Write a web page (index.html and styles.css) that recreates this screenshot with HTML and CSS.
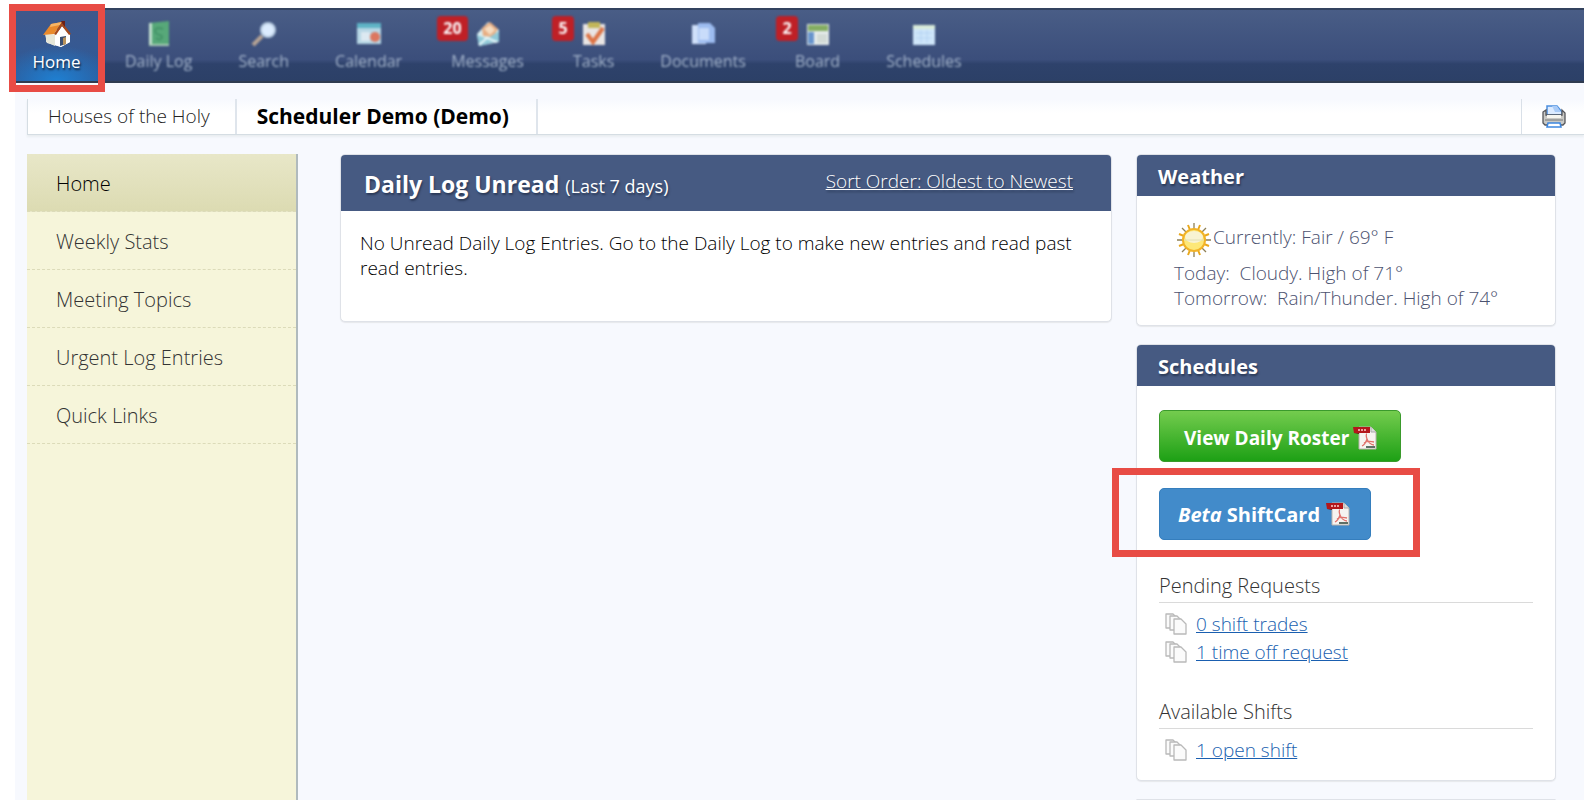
FILE: index.html
```html
<!DOCTYPE html>
<html lang="en">
<head>
    <meta charset="UTF-8">
    <meta name="viewport" content="width=device-width, initial-scale=1.0">
    <title>Scheduler Demo</title>
    <link rel="stylesheet" href="styles.css">
</head>
<body>
    <!-- Shared icons -->
    <svg class="icon-defs" width="0" height="0" aria-hidden="true">
        <symbol id="icon-pdf" viewBox="0 0 24 24">
            <path d="M6 1h12l5 5v17H6z" fill="#f6f3f0" stroke="#b9b2ac" stroke-width="1"/>
            <path d="M18 1v5h5" fill="#dcdcdc" stroke="#a9a9a9" stroke-width="1"/>
            <path d="M14 8c-1 0-1 2 0 5 1 3 4 6 7 6M14 13c-1 3-3 6-5 7M11 17c3-2 6-2 10-1" fill="none" stroke="#e0706a" stroke-width="1.3"/>
            <path d="M13 21h9" stroke="#5f6f66" stroke-width="2"/>
            <path d="M0 1h17v6H1z" fill="#b3161b"/>
            <path d="M5 4h8" stroke="#e9a0a0" stroke-width="2" stroke-dasharray="2 1"/>
            <path d="M1 7h5v1z" fill="#701015"/>
        </symbol>
        <symbol id="icon-pages" viewBox="0 0 22 22">
            <g fill="#fbfbfb" stroke="#b9b9b9" stroke-width="1.3" stroke-linejoin="round">
                <path d="M1 1h7l3 3v11H1z"/>
                <path d="M5 3h7l4 4v10H5z"/>
                <path d="M9 6h7l5 5v10H9z"/>
            </g>
        </symbol>
    </svg>

    <div class="page">
        <nav class="topnav">
            <a href="#" class="nav-item active">
                <svg width="28" height="28" viewBox="0 0 28 28">
                    <path d="M2 14l10-5 15 5v8l-9 5-14-4z" fill="#f5f3ea"/>
                    <path d="M12 16l7-10 8 9v7l-9 5-6-2z" fill="#fff"/>
                    <path d="M3 14v8l9 4V15z" fill="#e5e6d8"/>
                    <path d="M8 4l11-2-8 12-11 1z" fill="#e98a2c"/>
                    <path d="M8 4l11-2-2 3-10 2z" fill="#f7b566"/>
                    <path d="M19 2l9 12-2 1-7-9-6 9-2-1z" fill="#a5491b"/>
                    <path d="M18 1h4v6l-3-4z" fill="#6d2015"/>
                    <path d="M17 17l6-1v8l-6 2z" fill="#3c4f70"/>
                    <path d="M20 18l3-1v7l-3 1z" fill="#b8925a"/>
                </svg>
                <span>Home</span>
            </a>
            <a href="#" class="nav-item">
                <svg width="28" height="28" viewBox="0 0 28 28">
                    <path d="M4 3l20-2v24H4z" fill="#57a879"/>
                    <path d="M4 3h3v22H4z" fill="#c3e0cf"/>
                    <path d="M18 9c-7-3-9 1-7 4s6 1 6 4-4 3-6 1" fill="none" stroke="#449468" stroke-width="2"/>
                    <path d="M4 25h20" stroke="#a8cbb5" stroke-width="2"/>
                </svg>
                <span>Daily Log</span>
            </a>
            <a href="#" class="nav-item">
                <svg width="28" height="28" viewBox="0 0 28 28">
                    <path d="M3 25l9-9" stroke="#b4a294" stroke-width="4"/>
                    <circle cx="18" cy="10" r="7" fill="#dcecff" stroke="#b8cce0" stroke-width="2"/>
                </svg>
                <span>Search</span>
            </a>
            <a href="#" class="nav-item">
                <svg width="28" height="28" viewBox="0 0 28 28">
                    <path d="M2 3h24v21H2z" fill="#b7d7e5"/>
                    <path d="M2 3h24v5H2z" fill="#5fb3c5"/>
                    <path d="M6 12h9v9H6z" fill="#dce9f1"/>
                    <circle cx="20" cy="17" r="5" fill="#dc775f"/>
                </svg>
                <span>Calendar</span>
            </a>
            <a href="#" class="nav-item has-badge">
                <b class="badge">20</b>
                <svg width="28" height="28" viewBox="0 0 28 28">
                    <path d="M3 14L14 2l11 8v12L5 26z" fill="#d9eef2"/>
                    <path d="M8 8l8-6 8 7-5 8-10-1z" fill="#e7ad82"/>
                    <path d="M10 9l6-4 5 5-5 5z" fill="#f6dcc0"/>
                    <path d="M3 15l10 4 12-8v10L5 26z" fill="#8fc9d8"/>
                    <path d="M5 25l8-7 10 4" fill="none" stroke="#e8f7fa" stroke-width="2"/>
                </svg>
                <span>Messages</span>
            </a>
            <a href="#" class="nav-item has-badge">
                <b class="badge">5</b>
                <svg width="28" height="28" viewBox="0 0 28 28">
                    <path d="M3 4h22v21H3z" fill="#e9e5e4"/>
                    <path d="M8 2h12v6H8z" fill="#c2b65a"/>
                    <path d="M7 14l6 8 10-14" fill="none" stroke="#dc7345" stroke-width="4"/>
                </svg>
                <span>Tasks</span>
            </a>
            <a href="#" class="nav-item">
                <svg width="28" height="28" viewBox="0 0 28 28">
                    <path d="M3 5h14v19H3z" fill="#cfe0fa"/>
                    <path d="M9 3h12l5 5v15H9z" fill="#9dbcf0"/>
                    <path d="M10 8h10v12H10z" fill="#c9dcfa"/>
                </svg>
                <span>Documents</span>
            </a>
            <a href="#" class="nav-item has-badge">
                <b class="badge">2</b>
                <svg width="28" height="28" viewBox="0 0 28 28">
                    <path d="M3 4h22v21H3z" fill="#e6ecec"/>
                    <path d="M4 5h20v6H4z" fill="#84ad62"/>
                    <path d="M4 12h6v12H4z" fill="#6794cc"/>
                    <path d="M13 14h10v9H13z" fill="#d3dbd6"/>
                </svg>
                <span>Board</span>
            </a>
            <a href="#" class="nav-item">
                <svg width="28" height="28" viewBox="0 0 28 28">
                    <path d="M3 5h22v20H3z" fill="#cfe6fa"/>
                    <path d="M3 5h22v4H3z" fill="#d9ecd9"/>
                    <path d="M6 13h16M6 18h16M11 10v13M17 10v13" stroke="#b4d3f2" stroke-width="1"/>
                </svg>
                <span>Schedules</span>
            </a>
            <div class="highlight highlight-home"></div>
        </nav>

        <div class="subnav">
            <a href="#" class="crumb">Houses of the Holy</a>
            <a href="#" class="crumb current">Scheduler Demo (Demo)</a>
            <a href="#" class="print" aria-label="Print">
                <svg width="24" height="24" viewBox="0 0 24 24">
                    <path d="M5 9V2h10l5 6v3H5z" fill="#dcebff" stroke="#4b8fe0" stroke-width="1.5"/>
                    <path d="M10 2h5l4 6h-6z" fill="#a9cbf7"/>
                    <path d="M1 8l3-2v5h16V6l3 3v10l-2 2H3l-2-2z" fill="#c9c9c5" stroke="#55565a" stroke-width="1.3"/>
                    <path d="M5 11h14v3H5z" fill="#f6f5ef"/>
                    <path d="M3 16h18" stroke="#77787a" stroke-width="1"/>
                    <path d="M6 19h12l1 4H5z" fill="#fff" stroke="#3c86e0" stroke-width="1.5"/>
                </svg>
            </a>
        </div>

        <div class="content">
            <ul class="sidebar">
                <li><a href="#" class="selected">Home</a></li>
                <li><a href="#">Weekly Stats</a></li>
                <li><a href="#">Meeting Topics</a></li>
                <li><a href="#">Urgent Log Entries</a></li>
                <li><a href="#">Quick Links</a></li>
            </ul>

            <main class="main">
                <section class="card">
                    <div class="card-header large">
                        <h1>Daily Log Unread <small>(Last 7 days)</small></h1>
                        <a href="#">Sort Order: Oldest to Newest</a>
                    </div>
                    <p class="log-text">No Unread Daily Log Entries. Go to the Daily Log to make new entries and read past read entries.</p>
                </section>
            </main>

            <aside class="widgets">
                <section class="card">
                    <div class="card-header"><h2>Weather</h2></div>
                    <div class="weather">
                        <p class="weather-now">
                            <svg width="34" height="34" viewBox="0 0 34 34">
                                <g stroke="#8f8055" stroke-width="1.3">
                                    <path d="M17 0v34M0 17h34M5 5l24 24M29 5L5 29"/>
                                    <path d="M11 2l12 30M23 2L11 32M2 11l30 12M2 23l30-12" stroke="#e9a81c" stroke-width="2"/>
                                </g>
                                <circle cx="17" cy="17" r="12" fill="#f2b327"/>
                                <circle cx="17" cy="17" r="10" fill="#fde878"/>
                                <ellipse cx="17" cy="14" rx="9" ry="6" fill="#f8f3d2"/>
                                <path d="M7 17h20" stroke="#e2dfb4" stroke-width="1"/>
                            </svg>
                            <span>Currently: Fair / 69° F</span>
                        </p>
                        <p>Today:&nbsp; Cloudy. High of 71°</p>
                        <p>Tomorrow:&nbsp; Rain/Thunder. High of 74°</p>
                    </div>
                </section>

                <section class="card">
                    <div class="card-header"><h2>Schedules</h2></div>
                    <div class="schedules">
                        <button type="button" class="btn btn-roster">View Daily Roster <svg width="24" height="24"><use href="#icon-pdf"/></svg></button>
                        <div class="shiftcard">
                            <button type="button" class="btn btn-shiftcard"><span><em>Beta</em> ShiftCard</span> <svg width="24" height="24"><use href="#icon-pdf"/></svg></button>
                            <div class="highlight highlight-shiftcard"></div>
                        </div>

                        <h3>Pending Requests</h3>
                        <ul class="requests">
                            <li><svg width="22" height="22"><use href="#icon-pages"/></svg><a href="#">0 shift trades</a></li>
                            <li><svg width="22" height="22"><use href="#icon-pages"/></svg><a href="#">1 time off request</a></li>
                        </ul>

                        <h3>Available Shifts</h3>
                        <ul class="requests">
                            <li><svg width="22" height="22"><use href="#icon-pages"/></svg><a href="#">1 open shift</a></li>
                        </ul>
                    </div>
                </section>

                <section class="card"></section>
            </aside>
        </div>
    </div>
</body>
</html>
```
FILE: styles.css
```css
* {
    box-sizing: border-box;
}

body {
    margin: 0;
    background-color: #fff;
    font-family: "Open Sans", "Noto Sans", sans-serif;
    font-size: 19px;
    font-weight: 300;
    line-height: 25px;
    color: #000;
}

h1, h2, h3, p, ul {
    margin: 0;
    padding: 0;
}

ul {
    list-style: none;
}

svg {
    display: block;
    flex-shrink: 0;
}

.icon-defs {
    position: absolute;
}

.page {
    display: flex;
    flex-direction: column;
    min-height: calc(100vh - 8px);
    margin: 8px 0 0 15px;
    background-color: #f7f9fe;
}

/* Top navigation */
.topnav {
    position: relative;
    display: flex;
    height: 75px;
    border-top: 2px solid #33435f;
    border-bottom: 2px solid #2f3b50;
    background: linear-gradient(#495d86, #3b4e7b 70%, #2e426b 76%, #2c4067);
}

.nav-item {
    position: relative;
    display: flex;
    flex-direction: column;
    align-items: center;
    padding: 10px 23px 0;
    font-size: 16px;
    font-weight: 400;
    line-height: 27px;
    color: #a3b3ca;
    text-decoration: none;
}

.nav-item svg,
.nav-item span,
.badge {
    filter: blur(1px);
}

.nav-item.active {
    width: 83px;
    margin-right: 4px;
    padding: 10px 0 0;
    color: #fff;
    font-size: 17px;
    background: radial-gradient(ellipse 70% 50% at 50% 100%, #1f80d2, rgba(31, 128, 210, 0)), linear-gradient(#41588a, #2b5a9a);
    text-shadow: 1px 2px 2px #14233c;
}

.nav-item.active svg,
.nav-item.active span {
    filter: none;
}

.nav-item.has-badge {
    margin-left: 3px;
}

.badge {
    position: absolute;
    top: 6px;
    right: calc(50% + 20px);
    padding: 0 6px;
    border-radius: 4px;
    background-color: #bf2026;
    color: #fff;
    font-size: 16px;
    font-weight: 700;
    line-height: 25px;
}

/* Red callout boxes */
.highlight {
    position: absolute;
    border: 7px solid #e84c45;
    pointer-events: none;
}

.highlight-home {
    top: -6px;
    left: -6px;
    width: 96px;
    height: 88px;
}

.highlight-shiftcard {
    top: -20px;
    left: -47px;
    right: -49px;
    bottom: -17px;
}

/* Location bar */
.subnav {
    display: flex;
    height: 36px;
    margin: 16px 0 19px 12px;
    border-bottom: 1px solid #d5dde3;
    border-left: 1px solid #d5dde3;
    background: linear-gradient(#f7f9fe, #fff 40%);
    box-shadow: 0 2px 2px #e9edf1;
}

.crumb {
    padding: 5px 25px 0 20px;
    border-right: 2px solid #dfe5ec;
    color: #222;
    text-decoration: none;
}

.crumb.current {
    padding: 5px 27px 0 20px;
    color: #000;
    font-size: 21px;
    font-weight: 700;
}

.print {
    margin-left: auto;
    padding: 5px 18px 0 20px;
    border-left: 1px solid #d9e0e8;
}

.content {
    display: flex;
    flex: 1;
    padding-left: 12px;
}

/* Side menu */
.sidebar {
    width: 271px;
    flex-shrink: 0;
    border-right: 2px solid #b0babd;
    background-color: #f6f5da;
}

.sidebar a {
    display: block;
    height: 58px;
    padding: 17px 29px 0;
    border-bottom: 1px dashed #dcdbb9;
    color: #333;
    font-size: 20px;
    text-decoration: none;
}

.sidebar a.selected {
    background: linear-gradient(#e8e7c8, #dcdbb2);
    color: #000;
}

/* Cards */
.main {
    flex: 1;
    margin-left: 42px;
}

.widgets {
    width: 420px;
    flex-shrink: 0;
    display: flex;
    flex-direction: column;
    gap: 18px;
    margin: 0 28px 0 24px;
}

.card {
    border: 1px solid #dfe2e8;
    border-radius: 5px;
    background-color: #fff;
    box-shadow: 0 1px 1px #e6e8ec;
}

.card-header {
    display: flex;
    justify-content: space-between;
    height: 41px;
    padding: 9px 21px 0;
    border-radius: 4px 4px 0 0;
    background-color: #465a82;
    color: #fff;
    text-shadow: 1px 2px 2px #2b3a58;
}

.card-header.large {
    height: 56px;
    padding: 14px 38px 0 23px;
}

.card-header a {
    color: #fff;
}

h1 {
    font-size: 23px;
    line-height: 30px;
}

h1 small {
    font-size: 18px;
    font-weight: 400;
}

h2 {
    font-size: 20px;
    line-height: 25px;
}

.log-text {
    padding: 20px 24px 40px 19px;
}

/* Weather */
.weather {
    padding: 27px 36px 14px 37px;
    color: #4c5270;
}

.weather-now {
    display: flex;
    align-items: flex-start;
    gap: 2px;
    height: 38px;
    padding-left: 3px;
}

.weather-now span {
    padding-top: 2px;
}

/* Schedules */
.schedules {
    padding: 24px 22px 16px;
}

.btn {
    display: flex;
    align-items: center;
    height: 52px;
    border-radius: 5px;
    color: #fff;
    font-family: inherit;
    font-weight: 700;
}

.btn-roster {
    gap: 4px;
    padding: 3px 23px 0 24px;
    border: 1px solid #3a9a2c;
    background: linear-gradient(#74cc4e, #1da015);
    font-size: 19px;
}

.btn-shiftcard {
    gap: 6px;
    padding: 0 20px 0 18px;
    border: 1px solid #357ebd;
    background-color: #428bca;
    font-size: 20px;
}

.shiftcard {
    position: relative;
    width: fit-content;
    margin: 26px 0 33px;
}

h3 {
    padding-bottom: 4px;
    border-bottom: 1px solid #dadada;
    color: #333;
    font-size: 20px;
    font-weight: 300;
}

.requests {
    padding: 7px 0 0 6px;
}

.requests li {
    display: flex;
    align-items: center;
    gap: 9px;
    height: 28px;
}

.requests + h3 {
    margin-top: 33px;
}

.requests a {
    color: #1a5fb0;
}
```
